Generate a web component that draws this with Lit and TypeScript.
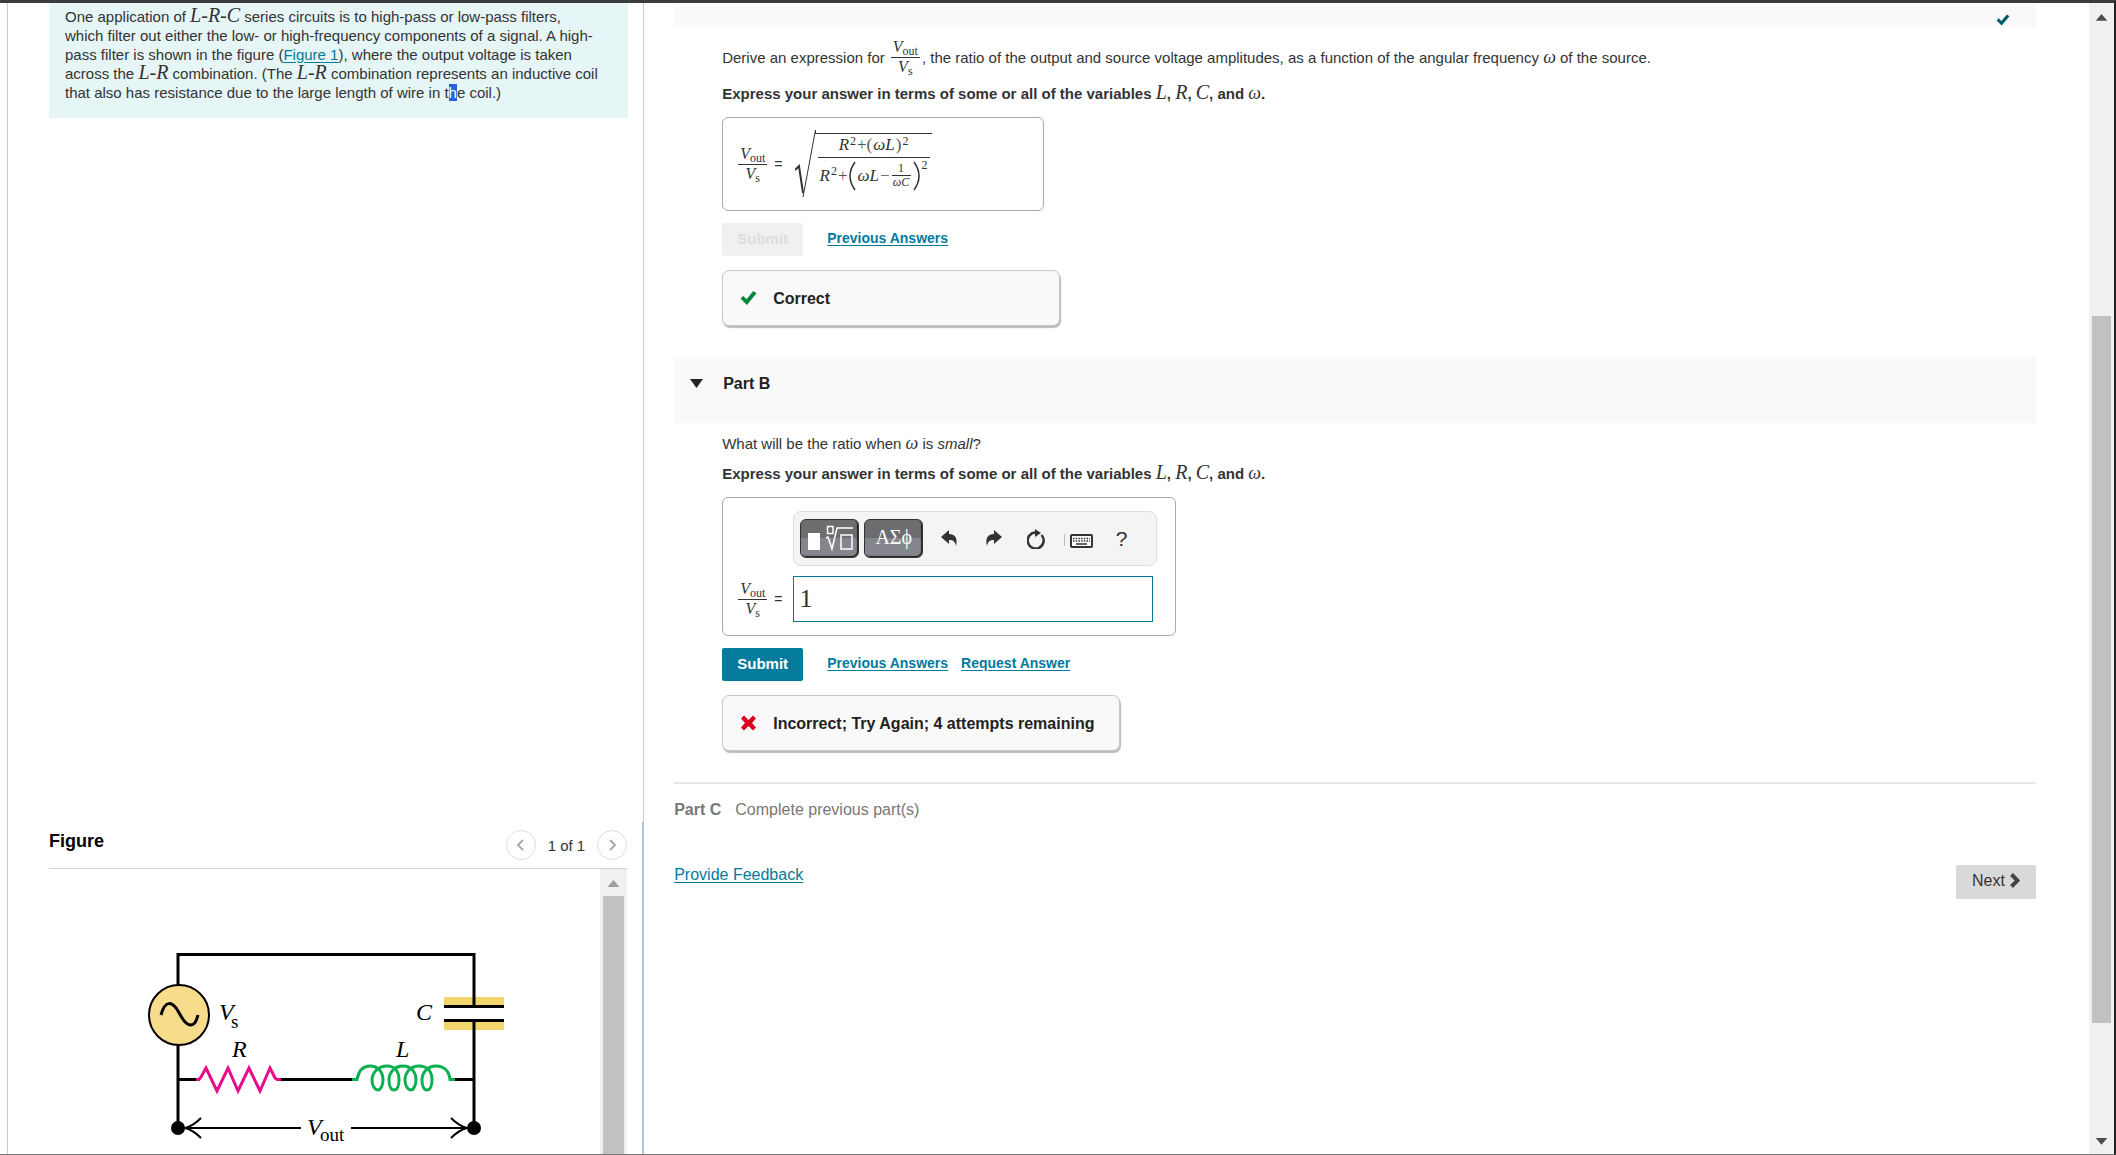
import { LitElement, html, css, svg } from "lit";
import { customElement, property, state } from "lit/decorators.js";

/** Ratio of output to source voltage, set as a stacked fraction. */
@customElement("voltage-ratio")
class VoltageRatio extends LitElement {
  static styles = css`
    :host { display: inline-flex; vertical-align: middle; }
    .frac {
      display: inline-flex;
      flex-direction: column;
      align-items: center;
      font: italic 16px/20px "Liberation Serif", serif;
      color: #333;
    }
    .part { height: 20px; padding: 0 2px; white-space: nowrap; }
    .top { border-bottom: 1px solid #333; }
    .low { line-height: 18px; }
    .sub {
      font-style: normal;
      font-size: 12px;
      line-height: 1px;
      vertical-align: -3px;
    }
  `;
  render() {
    return html`<span class="frac"
      ><span class="part top">V<span class="sub">out</span></span
      ><span class="part low">V<span class="sub">s</span></span></span>`;
  }
}

/** A vertical scroll rail with arrows and a thumb. */
@customElement("scroll-rail")
class ScrollRail extends LitElement {
  @property({ type: Number }) before = 0;
  @property({ type: Number }) thumb = 1;
  @property({ type: Number }) after = 0;
  @property({ type: Boolean }) muted = false;
  static styles = css`
    :host { display: flex; flex-direction: column; background: #f0f0f0; }
    .arrow { flex: none; width: 100%; height: 27px; fill: #4d4d4d; }
    .muted { fill: #a0a0a0; }
    .track { flex: 1; display: flex; flex-direction: column; padding: 0 3px; min-height: 0; }
    .bar { background: #c1c1c1; }
  `;
  render() {
    return html`
      <svg class="arrow ${this.muted ? "muted" : ""}" viewBox="0 0 26 27"><path d="M7 18 13 11 19 18z" /></svg>
      <div class="track">
        <div style="flex:${this.before}"></div>
        <div class="bar" style="flex:${this.thumb}"></div>
        <div style="flex:${this.after}"></div>
      </div>
      ${this.after
        ? html`<svg class="arrow" viewBox="0 0 26 27"><path d="M7 11 13 18 19 11z" /></svg>`
        : ""}
    `;
  }
}

const circuit = svg`
  <g fill="none" stroke="#000" stroke-width="3">
    <rect x="395" y="128" width="60" height="33" fill="#f2d56b" stroke="none" />
    <rect x="395" y="139" width="60" height="12" fill="#fff" stroke="none" />
    <path d="M129 117V85.500H425V138M425 152V258M129 175V258M129 210.500H149M230 210.500H306M404 210.500H425" />
    <path d="M395 137.500H455M395 151.500H455" />
    <circle cx="130" cy="146" r="30" fill="#f6dc8b" stroke-width="2" />
    <path d="M112 146C116 131 123 132 129 142C134 151 137 156 142 156C146 156 148 150 149 146" />
    <path d="M147 210.500H150L152 208L157 199L168 222L179 199L189 222L200 199L211 222L221 199L226 209L228 210.500H232" stroke="#ea0a8c" />
    <path stroke="#0bb04f" d="M303 210.500H308C310 200 315 197 321 197C329 197 334 203 334 211C334 217 331 221 329 221C326 221 323 217 323 211C323 203 330 197 338 197C346 197 350 203 350 211C350 217 348 221 345 221C342 221 340 217 340 211C340 203 346 197 354 197C362 197 367 203 367 211C367 217 364 221 362 221C359 221 356 217 356 211C356 203 362 197 370 197C379 197 383 203 383 211C383 217 381 221 378 221C375 221 373 217 373 211C373 203 379 197 387 197C395 197 400 202 401 210.500H406" />
    <path d="M137 259H252M302 259H417M152 249Q144 257 136 259Q144 261 152 269M402 249Q410 257 418 259Q410 261 402 269" stroke-width="2" />
  </g>
  <circle cx="129" cy="259" r="7" /><circle cx="425" cy="259" r="7" />
  <g class="lbl">
    <text x="170" y="151">V</text><text class="up" x="182" y="159">s</text>
    <text x="183" y="188">R</text><text x="367" y="151">C</text><text x="347" y="188">L</text>
    <text x="258" y="266">V</text><text class="up" x="271" y="272">out</text>
  </g>`;

const check = html`<svg class="mark" viewBox="0 0 16 14"><path d="M0.500 7.500 3 5 6.200 8.200 12.500 0.500 15.500 2.500 6.500 13.500z" fill="currentColor" /></svg>`;
const turn = svg`<path d="M8 0V4C14 4 17 8 15 16C14 11 12 10 8 10V14L0 7z" />`;

@customElement("app-root")
class AppRoot extends LitElement {
  @state() private answer = "1";

  static styles = css`
    :host {
      display: flex;
      flex-direction: column;
      height: 100vh;
      overflow: hidden;
      box-sizing: border-box;
      border-top: 3px solid #3c3c3c;
      border-right: 2px solid #222;
      border-bottom: 1px solid #777;
      background: #fff;
      color: #333;
      font: 15px/19px "Liberation Sans", Arial, sans-serif;
    }
    * { box-sizing: border-box; }
    a { color: #047a9c; text-underline-offset: 2px; }
    p { margin: 0; }
    button { font: inherit; padding: 0; border: 0; cursor: pointer; }
    .page { flex: 1; display: flex; min-height: 0; }
    .gutter { flex: none; width: 8px; border-right: 1px solid #ccc; }
    .left { flex: 0 0 calc(30% + 2px); display: flex; flex-direction: column; min-width: 0; }
    .intro { flex: 1; padding: 0 15px 0 41px; border-right: 1px solid #c3cde0; min-height: 0; }
    .card { background: #e6f6f7; padding: 4px 0 16px 16px; white-space: nowrap; height: 115px; }
    .m { font: italic 20px/1px "Liberation Serif", serif; font-weight: 400; }
    .w { font: italic 18px/1px "Liberation Serif", serif; }
    .hl { background: #2a62d9; color: #fff; }
    .figure { flex: none; padding: 0 15px 0 41px; border-right: 2px solid #adc6db; }
    .fighead { display: flex; align-items: center; height: 47px; border-bottom: 1px solid #d5d5d5; }
    .fighead h2 { flex: 1; margin: 0; padding-bottom: 8px; font-size: 18px; color: #000; }
    .round { width: 30px; height: 30px; border-radius: 50%; border: 1px solid #ddd; background: #fff; display: flex; align-items: center; justify-content: center; }
    .round svg { width: 9px; height: 12px; fill: none; stroke: #aaa; stroke-width: 2; }
    .count { padding: 0 12px; }
    .figbody { display: flex; height: 285px; }
    .figbody .pic { flex: 1; overflow: hidden; }
    .figbody scroll-rail { flex: none; width: 27px; }
    .circuit { display: block; width: 551px; height: 285px; }
    .lbl { font: italic 24px "Liberation Serif", serif; }
    .up { font-style: normal; font-size: 19px; }

    .right { flex: 1; min-width: 0; padding: 2px 53px 0 30px; }
    .strip { background: #f9f9f9; display: flex; align-items: center; }
    .strip.a { height: 22px; justify-content: flex-end; padding: 7px 26px 0 0; color: #005a70; }
    .strip.a .mark { width: 14px; height: 12px; }
    .strip.b { height: 66px; margin-top: 31px; padding: 0 16px 14px; gap: 20px; font-weight: 700; font-size: 16px; color: #222; }
    .strip.b button { width: 13px; height: 16px; background: none; display: flex; align-items: center; }
    .strip.b svg { width: 13px; height: 9px; fill: #222; }
    .body { padding-left: 48px; }
    .derive { height: 42px; margin: 9px 0 6px; display: flex; align-items: center; gap: 6px; }
    .derive .rest { margin-left: -4px; }
    .bold { font-weight: 700; height: 20px; }
    .box { border: 1px solid #aaa; border-radius: 6px; background: #fff; }
    .derived { width: 322px; height: 94px; margin-top: 13px; padding: 10px 15px; display: flex; align-items: center; gap: 7px; }
    .eq { font-size: 14px; }
    .root { display: flex; margin-left: 5px; height: 68px; }
    .root > svg { width: 21px; height: 68px; }
    .under { display: flex; flex-direction: column; align-items: center; height: 60px; margin-top: 3px; padding: 0 2px; border-top: 1px solid #333; font: italic 17px/22px "Liberation Serif", serif; }
    .num { height: 23px; display: flex; gap: 1px; }
    .den { border-top: 1px solid #333; height: 36px; display: flex; align-items: center; padding: 0 2px; gap: 1px; }
    .den svg { width: 8px; height: 30px; fill: none; stroke: #333; }
    .n { font-style: normal; color: #555; }
    .sup { font-style: normal; font-size: 12px; line-height: 14px; align-self: flex-start; }
    .den .drop { margin-top: 6px; }
    .small { display: inline-flex; flex-direction: column; align-items: center; font-size: 12px; line-height: 13px; padding: 0 1px; }
    .small span:first-child { font-style: normal; border-bottom: 1px solid #333; width: 19px; text-align: center; }
    .actions { display: flex; align-items: center; height: 33px; margin-top: 12px; }
    .submit { width: 81px; height: 33px; border-radius: 2px; background: #047a9c; color: #fff; font-weight: 700; padding-bottom: 3px; }
    .submit:disabled { background: #f0f0f0; color: #ddd; }
    .actions a { font-weight: 700; font-size: 14px; margin-left: 13px; padding-bottom: 2px; }
    .actions .submit + a { margin-left: 24px; }
    .result { display: flex; align-items: center; gap: 16px; margin-top: 14px; padding: 0 17px; height: 56px; border: 1px solid #c7c7c7; border-radius: 7px; background: #f9f9f9; box-shadow: 1px 2px 1px #bbb; font-weight: 700; font-size: 16px; color: #222; }
    .result .mark { width: 17px; height: 16px; flex: none; }
    .ok { width: 338px; }
    .ok .mark { color: #008638; }
    .bad { width: 398px; }
    .bad .mark { fill: #db0020; }
    .q { margin-top: 11px; height: 20px; margin-bottom: 10px; }
    .entry { width: 454px; height: 139px; margin-top: 13px; padding: 13px 18px 13px 15px; display: flex; flex-direction: column; gap: 10px; }
    .tools { margin-left: 55px; height: 56px; border: 1px solid #ddd; border-radius: 8px; background: #f4f4f4; display: flex; align-items: center; padding: 0 6px; }
    .key { width: 59px; height: 39px; border: 1px solid #333; border-radius: 6px; background: linear-gradient(#6d6d70 50%, #85858d 50%); color: #fff; font: 20px/30px "Liberation Serif", serif; display: flex; align-items: center; justify-content: center; padding-bottom: 4px; margin-right: 5px; box-shadow: inset -1px -1px 1px #222; }
    .key svg { width: 46px; height: 28px; margin-top: 4px; }
    .tool { flex: none; width: 43px; height: 39px; background: none; color: #333; font-size: 21px; display: flex; align-items: center; justify-content: center; }
    .tool svg { width: 18px; height: 20px; fill: #333; }
    .tool .wide { width: 30px; height: 18px; }
    .tool .flip { transform: scaleX(-1); }
    .field { display: flex; align-items: center; gap: 7px; }
    .field input { flex: 1; min-width: 0; height: 46px; margin: 0 4px 0 3px; padding: 0 6px; border: 1px solid #047a9c; border-radius: 0; outline: 0; color: #333; background: #fff; font: 26px "Liberation Serif", serif; }
    .partc { margin-top: 31px; border-top: 2px solid #e6e6e6; padding-top: 16px; font-size: 16px; color: #777; display: flex; gap: 14px; }
    .foot { display: flex; justify-content: space-between; align-items: flex-start; margin-top: 46px; font-size: 16px; }
    .next { width: 80px; height: 34px; border-radius: 2px; background: #d9d9d9; color: #333; display: flex; align-items: center; justify-content: center; gap: 5px; padding-bottom: 3px; }
    .next svg { width: 10px; height: 15px; fill: none; stroke: #444; stroke-width: 4; }
    .main-rail { flex: none; width: 25px; }
  `;

  private express() {
    return html`<p class="bold">Express your answer in terms of some or all of the variables
      <span class="m">L</span>, <span class="m">R</span>, <span class="m">C</span>, and <span class="w">ω</span>.</p>`;
  }

  render() {
    return html`
      <div class="page">
        <div class="gutter"></div>
        <section class="left">
          <div class="intro">
            <p class="card">One application of <span class="m">L-R-C</span> series circuits is to high-pass or low-pass filters,<br />which filter out either the low- or high-frequency components of a signal. A high-<br />pass filter is shown in the figure (<a href="#figure">Figure 1</a>), where the output voltage is taken<br />across the <span class="m">L-R</span> combination. (The <span class="m">L-R</span> combination represents an inductive coil<br />that also has resistance due to the large length of wire in t<span class="hl">h</span>e coil.)</p>
          </div>
          <div class="figure" id="figure">
            <div class="fighead">
              <h2>Figure</h2>
              <button class="round" aria-label="Previous figure"><svg viewBox="0 0 9 12"><path d="M7 1 2 6 7 11" /></svg></button>
              <span class="count">1 of 1</span>
              <button class="round" aria-label="Next figure"><svg viewBox="0 0 9 12"><path d="M2 1 7 6 2 11" /></svg></button>
            </div>
            <div class="figbody">
              <div class="pic"><svg class="circuit" viewBox="0 0 551 285">${circuit}</svg></div>
              <scroll-rail muted></scroll-rail>
            </div>
          </div>
        </section>
        <main class="right">
          <div class="strip a">${check}</div>
          <div class="body">
            <p class="derive"><span>Derive an expression for</span><voltage-ratio></voltage-ratio><span class="rest">, the ratio of the output and source voltage amplitudes, as a function of the angular frequency <span class="w">ω</span> of the source.</span></p>
            ${this.express()}
            <div class="box derived">
              <voltage-ratio></voltage-ratio><span class="eq">=</span>
              <div class="root">
                <svg viewBox="0 0 21 68" fill="none" stroke="#333"><path d="M0 40 4 36 8 63" stroke-width="2" /><path d="M8 67 20.500 0V4" /></svg>
                <div class="under">
                  <span class="num">R<span class="sup">2</span><span class="n">+(</span>ωL<span class="n">)</span><span class="sup">2</span></span>
                  <span class="den">R<span class="sup drop">2</span><span class="n">+</span><svg viewBox="0 0 8 30"><path d="M7 1Q-3 15 7 29" stroke-width="1.500" /></svg>ωL<span class="n">−</span><span class="small"><span>1</span><span>ωC</span></span><svg viewBox="0 0 8 30"><path d="M1 1Q11 15 1 29" stroke-width="1.500" /></svg><span class="sup">2</span></span>
                </div>
              </div>
            </div>
            <div class="actions"><button class="submit" disabled>Submit</button><a href="#previous-a">Previous Answers</a></div>
            <div class="result ok">${check}<span>Correct</span></div>
          </div>
          <div class="strip b"><button aria-label="Collapse Part B"><svg viewBox="0 0 13 9"><path d="M0 0H13L6.500 9z" /></svg></button><span>Part B</span></div>
          <div class="body">
            <p class="q">What will be the ratio when <span class="w">ω</span> is <i>small</i>?</p>
            ${this.express()}
            <div class="box entry">
              <div class="tools">
                <button class="key" aria-label="Templates"><svg viewBox="0 0 46 28" fill="none" stroke="#fff" stroke-width="1.500"><path d="M1 8H13V25H1z" fill="#fff" stroke="none" /><path d="M20.500 1.500H26V8.500H20.500zM19 13 21 12 25 24 30 3H46M34 10H45V24H34z" /></svg></button>
                <button class="key" aria-label="Symbols">ΑΣϕ</button>
                <button class="tool" aria-label="Undo"><svg viewBox="0 0 18 18">${turn}</svg></button>
                <button class="tool" aria-label="Redo"><svg class="flip" viewBox="0 0 18 18">${turn}</svg></button>
                <button class="tool" aria-label="Reset"><svg viewBox="0 0 18 20"><path d="M14.500 6A8 8 0 1 1 9 3.500" fill="none" stroke="#333" stroke-width="2.500" /><path d="M8 0 14 4 8 8z" /></svg></button>
                <button class="tool" aria-label="Keyboard"><svg class="wide" viewBox="0 0 30 18"><path d="M0.500 4V16" stroke="#bbb" /><rect x="7" y="5" width="21" height="12" rx="1" fill="#fff" stroke="#333" stroke-width="2" /><path d="M9 8.500H26M9 11H26" stroke="#333" stroke-width="1.500" stroke-dasharray="1.500 1.200" /><path d="M12 14H23" stroke="#333" stroke-width="1.500" /></svg></button>
                <button class="tool" aria-label="Help">?</button>
              </div>
              <div class="field"><voltage-ratio></voltage-ratio><span class="eq">=</span><input aria-label="Answer" .value=${this.answer} @input=${(e: Event) => (this.answer = (e.target as HTMLInputElement).value)} /></div>
            </div>
            <div class="actions"><button class="submit">Submit</button><a href="#previous-b">Previous Answers</a><a href="#request">Request Answer</a></div>
            <div class="result bad"><svg class="mark" viewBox="0 0 16 16"><path d="M3.500 0.500 8 5 12.500 0.500 15.500 3.500 11.500 8 15.500 12.500 12.500 15.500 8 11 3.500 15.500 0.500 12.500 4.500 8 0.500 3.500z" /></svg><span>Incorrect; Try Again; 4 attempts remaining</span></div>
          </div>
          <div class="partc"><b>Part C</b><span>Complete previous part(s)</span></div>
          <div class="foot"><a href="#feedback">Provide Feedback</a><button class="next">Next<svg viewBox="0 0 10 15"><path d="M1.500 1.500 7.500 7.500 1.500 13.500" /></svg></button></div>
        </main>
        <scroll-rail class="main-rail" before="285" thumb="706" after="104"></scroll-rail>
      </div>
    `;
  }
}
